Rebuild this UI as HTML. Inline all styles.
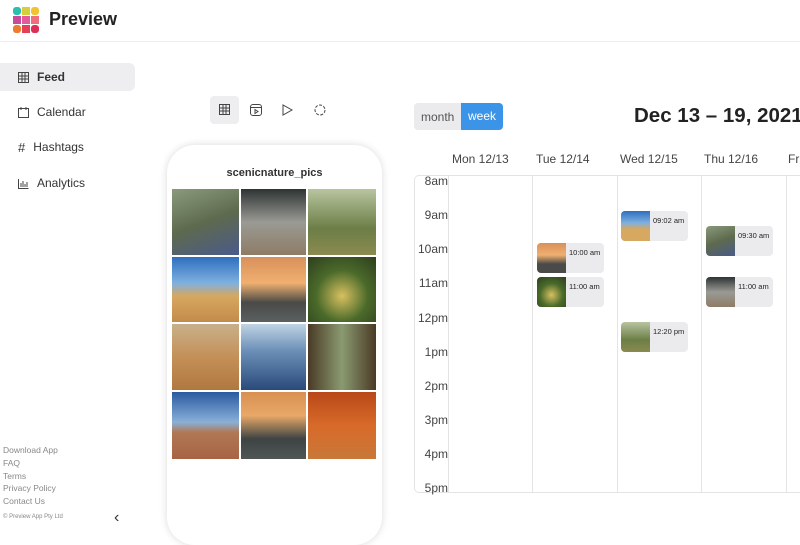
<!DOCTYPE html><html><head><style>
*{margin:0;padding:0;box-sizing:border-box}
body{width:800px;height:533px;overflow:hidden;background:#fff;font-family:"Liberation Sans",sans-serif;position:relative;color:#222}
.a{position:absolute}
.nav{left:0;width:135px;height:28px;display:flex;align-items:center;padding-left:18px;font-size:12px;color:#333}
.nav svg{margin-right:8px}
.ft{left:3px;font-size:8.5px;color:#888}
.ph{position:absolute}
.hr{position:absolute;left:414px;width:34px;text-align:right;font-size:12px;color:#444}
.vl{position:absolute;top:175px;height:318px;width:1px;background:#e4e4e4}
.dh{position:absolute;top:152px;font-size:12px;color:#444}
.ev{position:absolute;width:67px;height:30px;background:#ebebee;border-radius:4px;overflow:hidden}
.ev i{position:absolute;left:0;top:0;width:29px;height:30px}
.ev b{position:absolute;left:32px;top:5px;font-size:7.5px;font-weight:normal;color:#222}
</style></head><body>
<div class="a" style="left:0;top:41px;width:800px;height:1px;background:#eee"></div>
<svg class="a" style="left:13px;top:7px" width="26" height="26" viewBox="0 0 26 26">
<rect x="0" y="0" width="8" height="8" rx="3" fill="#2bbfb0"/><rect x="9" y="0" width="8" height="8" fill="#d6cf3b"/><rect x="18" y="0" width="8" height="8" rx="3" fill="#f1c232"/>
<rect x="0" y="9" width="8" height="8" fill="#c84a9a"/><rect x="9" y="9" width="8" height="8" fill="#e35a9d"/><rect x="18" y="9" width="8" height="8" fill="#ef6f7c"/>
<rect x="0" y="18" width="8" height="8" rx="3" fill="#ee7a2c"/><rect x="9" y="18" width="8" height="8" fill="#e5405a"/><rect x="18" y="18" width="8" height="8" rx="3" fill="#dd2e55"/></svg>
<div class="a" style="left:49px;top:9px;font-size:18px;font-weight:bold;color:#222">Preview</div>
<div class="a" style="left:0;top:63px;width:135px;height:28px;background:#eeeef0;border-radius:0 6px 6px 0"></div>
<div class="a nav" style="top:63px;font-weight:bold"><svg width="11" height="11" viewBox="0 0 11 11" fill="none" stroke="#444"><rect x=".5" y=".5" width="10" height="10"/><path d="M4 .5v10M7 .5v10M.5 4h10M.5 7h10"/></svg>Feed</div>
<div class="a nav" style="top:98px"><svg width="11" height="11" viewBox="0 0 11 11" fill="none" stroke="#444"><rect x=".5" y="1.5" width="10" height="9"/><path d="M3 0v3M8 0v3"/></svg>Calendar</div>
<div class="a nav" style="top:133px"><span style="margin-right:8px;font-size:13px">#</span>Hashtags</div>
<div class="a nav" style="top:169px"><svg width="11" height="11" viewBox="0 0 11 11" fill="none" stroke="#444"><path d="M.5 1v9.5h10M3 9V5M5 9V3M7 9V6M9 9V4"/></svg>Analytics</div>
<div class="a ft" style="top:445px">Download App</div><div class="a ft" style="top:458px">FAQ</div><div class="a ft" style="top:471px">Terms</div><div class="a ft" style="top:483px">Privacy Policy</div><div class="a ft" style="top:496px">Contact Us</div>
<div class="a ft" style="top:514px;font-size:6px">© Preview App Pty Ltd</div>
<div class="a" style="left:114px;top:509px;font-size:16px;color:#333">&lsaquo;</div>
<div class="a" style="left:210px;top:96px;width:29px;height:28px;background:#eeeef0;border-radius:4px"></div>
<svg class="a" style="left:219px;top:104px" width="11" height="11" viewBox="0 0 11 11" fill="none" stroke="#444"><rect x=".5" y=".5" width="10" height="10"/><path d="M4 .5v10M7 .5v10M.5 4h10M.5 7h10"/></svg>
<svg class="a" style="left:250px;top:104px" width="12" height="12" viewBox="0 0 12 12" fill="none" stroke="#444"><rect x=".5" y=".5" width="11" height="11" rx="2.5"/><path d="M.5 3.5h11M5 5.5v4l3-2z"/></svg>
<svg class="a" style="left:282px;top:104px" width="11" height="12" viewBox="0 0 11 12" fill="none" stroke="#444"><path d="M1 1v10l9-5z"/></svg>
<svg class="a" style="left:314px;top:104px" width="12" height="12" viewBox="0 0 12 12" fill="none" stroke="#444" stroke-dasharray="3 1.5"><circle cx="6" cy="6" r="5"/></svg>
<div class="a" style="left:167px;top:145px;width:215px;height:400px;border-radius:28px;box-shadow:0 0 8px rgba(0,0,0,.15);background:#fff"></div>
<div class="a" style="left:167px;top:167px;width:215px;text-align:center;font-size:11px;font-weight:bold;color:#333">scenicnature_pics</div>
<div class="ph" style="left:172px;top:189px;width:67px;height:66px;background:linear-gradient(160deg,#8a9a7c,#5e6a4e 50%,#4a5a8a)"></div>
<div class="ph" style="left:241px;top:189px;width:65px;height:66px;background:linear-gradient(#2e3434,#9a9a94 50%,#8e7c66)"></div>
<div class="ph" style="left:308px;top:189px;width:68px;height:66px;background:linear-gradient(#b8c4a0,#6c7e46 60%,#8a8a50)"></div>
<div class="ph" style="left:172px;top:257px;width:67px;height:65px;background:linear-gradient(#2e6fbf,#7fb0e0 40%,#d6a860 60%,#c48a4a)"></div>
<div class="ph" style="left:241px;top:257px;width:65px;height:65px;background:linear-gradient(#d8905a,#f0b070 40%,#4a4a48 70%,#5a6060)"></div>
<div class="ph" style="left:308px;top:257px;width:68px;height:65px;background:radial-gradient(circle at 50% 60%,#d8c060,#4a6a2a 50%,#2e3e1e)"></div>
<div class="ph" style="left:172px;top:324px;width:67px;height:66px;background:linear-gradient(#c8b08a,#c49058 50%,#b07840)"></div>
<div class="ph" style="left:241px;top:324px;width:65px;height:66px;background:linear-gradient(#c0d4e4,#6c90b8 40%,#2a4a7a)"></div>
<div class="ph" style="left:308px;top:324px;width:68px;height:66px;background:linear-gradient(90deg,#4a3a26,#8a9a70 50%,#4a3a26)"></div>
<div class="ph" style="left:172px;top:392px;width:67px;height:67px;background:linear-gradient(#2a5aa0,#8ab0d8 45%,#b07856 60%,#a86444)"></div>
<div class="ph" style="left:241px;top:392px;width:65px;height:67px;background:linear-gradient(#d89050,#e8a868 35%,#3e4444 70%,#505654)"></div>
<div class="ph" style="left:308px;top:392px;width:68px;height:67px;background:linear-gradient(#b84818,#d86a2a 50%,#c87838)"></div>
<div class="a" style="left:414px;top:103px;width:89px;height:27px;border-radius:4px;background:#ebebee;overflow:hidden;font-size:12px">
<span class="a" style="left:7px;top:7px;color:#555">month</span><div class="a" style="left:47px;top:0;width:42px;height:27px;background:#3c94e8;color:#fff;text-align:center;line-height:27px">week</div></div>
<div class="a" style="left:634px;top:104px;font-size:20.5px;font-weight:bold;color:#222;white-space:nowrap">Dec 13 – 19, 2021</div>
<div class="dh" style="left:452px">Mon 12/13</div><div class="dh" style="left:536px">Tue 12/14</div><div class="dh" style="left:620px">Wed 12/15</div><div class="dh" style="left:704px">Thu 12/16</div><div class="dh" style="left:788px">Fri</div>
<div class="a" style="left:414px;top:175px;width:400px;height:318px;border:1px solid #e4e4e4;border-radius:5px"></div>
<div class="vl" style="left:448px"></div><div class="vl" style="left:532px"></div><div class="vl" style="left:617px"></div><div class="vl" style="left:701px"></div><div class="vl" style="left:786px"></div>
<div class="hr" style="top:174px">8am</div><div class="hr" style="top:208px">9am</div><div class="hr" style="top:242px">10am</div><div class="hr" style="top:276px">11am</div><div class="hr" style="top:311px">12pm</div><div class="hr" style="top:345px">1pm</div><div class="hr" style="top:379px">2pm</div><div class="hr" style="top:413px">3pm</div><div class="hr" style="top:447px">4pm</div><div class="hr" style="top:481px">5pm</div>
<div class="ev" style="left:537px;top:243px"><i style="background:linear-gradient(#d8905a,#f0b070 40%,#4a4a48 70%)"></i><b>10:00 am</b></div>
<div class="ev" style="left:537px;top:277px"><i style="background:radial-gradient(circle at 50% 60%,#d8c060,#4a6a2a 50%,#2e3e1e)"></i><b>11:00 am</b></div>
<div class="ev" style="left:621px;top:211px"><i style="background:linear-gradient(#2e6fbf,#7fb0e0 40%,#d6a860 60%)"></i><b>09:02 am</b></div>
<div class="ev" style="left:621px;top:322px"><i style="background:linear-gradient(#b8c4a0,#6c7e46 60%,#8a8a50)"></i><b>12:20 pm</b></div>
<div class="ev" style="left:706px;top:226px"><i style="background:linear-gradient(160deg,#8a9a7c,#5e6a4e 50%,#4a5a8a)"></i><b>09:30 am</b></div>
<div class="ev" style="left:706px;top:277px"><i style="background:linear-gradient(#2e3434,#9a9a94 50%,#8e7c66)"></i><b>11:00 am</b></div>
</body></html>
